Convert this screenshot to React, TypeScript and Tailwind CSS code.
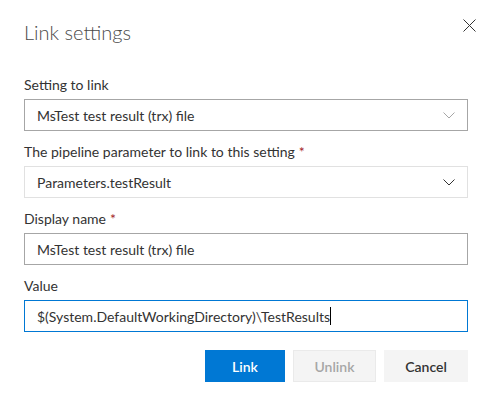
import React from 'react';

const font = "font-['Lato','Noto_Sans',sans-serif]";

const Chevron = ({ light }: { light?: boolean }) => (
  <svg width="12" height="7" viewBox="0 0 12 7" className={light ? 'text-[#a6a6a6]' : 'text-[#333333]'}>
    <path d="M0.5 0.5 L6 6 L11.5 0.5" fill="none" stroke="currentColor" strokeWidth="1" />
  </svg>
);

const Label = ({ text, required }: { text: string; required?: boolean }) => (
  <div className="h-5 leading-5 text-[14px] text-[#333333] mb-1">
    {text}
    {required && <span className="text-[#a4262c] ml-1">*</span>}
  </div>
);

export default function App() {
  return (
    <div className={`${font} w-[490px] h-[401px] bg-white relative pl-6 pr-[22px] pt-[18px]`}>
      <h1 className="text-[20px] leading-7 font-light text-[#4a4a4a]">Link settings</h1>
      <button className="absolute right-[14px] top-[18px] w-[14px] h-[14px] flex items-center justify-center text-[#333333]">
        <svg width="13" height="13" viewBox="0 0 13 13">
          <path d="M0.5 0.5 L12.5 12.5 M12.5 0.5 L0.5 12.5" stroke="currentColor" strokeWidth="1" fill="none" />
        </svg>
      </button>

      <div className="mt-[29px] flex flex-col gap-[11px]">
        <div>
          <Label text="Setting to link" />
          <div className="h-8 border border-[#a6a6a6] flex items-center justify-between pl-3 pr-3 text-[14px] text-[#333333]">
            <span>MsTest test result (trx) file</span>
            <Chevron light />
          </div>
        </div>
        <div>
          <Label text="The pipeline parameter to link to this setting" required />
          <div className="h-8 border border-[#e1e1e1] flex items-center justify-between pl-3 pr-3 text-[14px] text-[#333333]">
            <span>Parameters.testResult</span>
            <Chevron />
          </div>
        </div>
        <div>
          <Label text="Display name" required />
          <div className="h-8 border border-[#a6a6a6] flex items-center pl-3 text-[14px] text-[#333333]">
            MsTest test result (trx) file
          </div>
        </div>
        <div>
          <Label text="Value" />
          <div className="h-8 border border-[#0078d4] flex items-center pl-3 text-[14px] text-[#333333]">
            <span>$(System.DefaultWorkingDirectory)\TestResults</span>
            <span className="w-px h-[18px] bg-black" />
          </div>
        </div>
      </div>

      <div className="mt-[18px] flex justify-end gap-2">
        <button className="w-20 h-8 bg-[#0078d4] text-white text-[14px] font-semibold">Link</button>
        <button className="w-[83px] h-8 bg-[#f4f4f4] border border-[#eaeaea] text-[#a6a6a6] text-[14px] font-semibold">Unlink</button>
        <button className="w-[84px] h-8 bg-[#f4f4f4] text-[#333333] text-[14px] font-semibold">Cancel</button>
      </div>
    </div>
  );
}
